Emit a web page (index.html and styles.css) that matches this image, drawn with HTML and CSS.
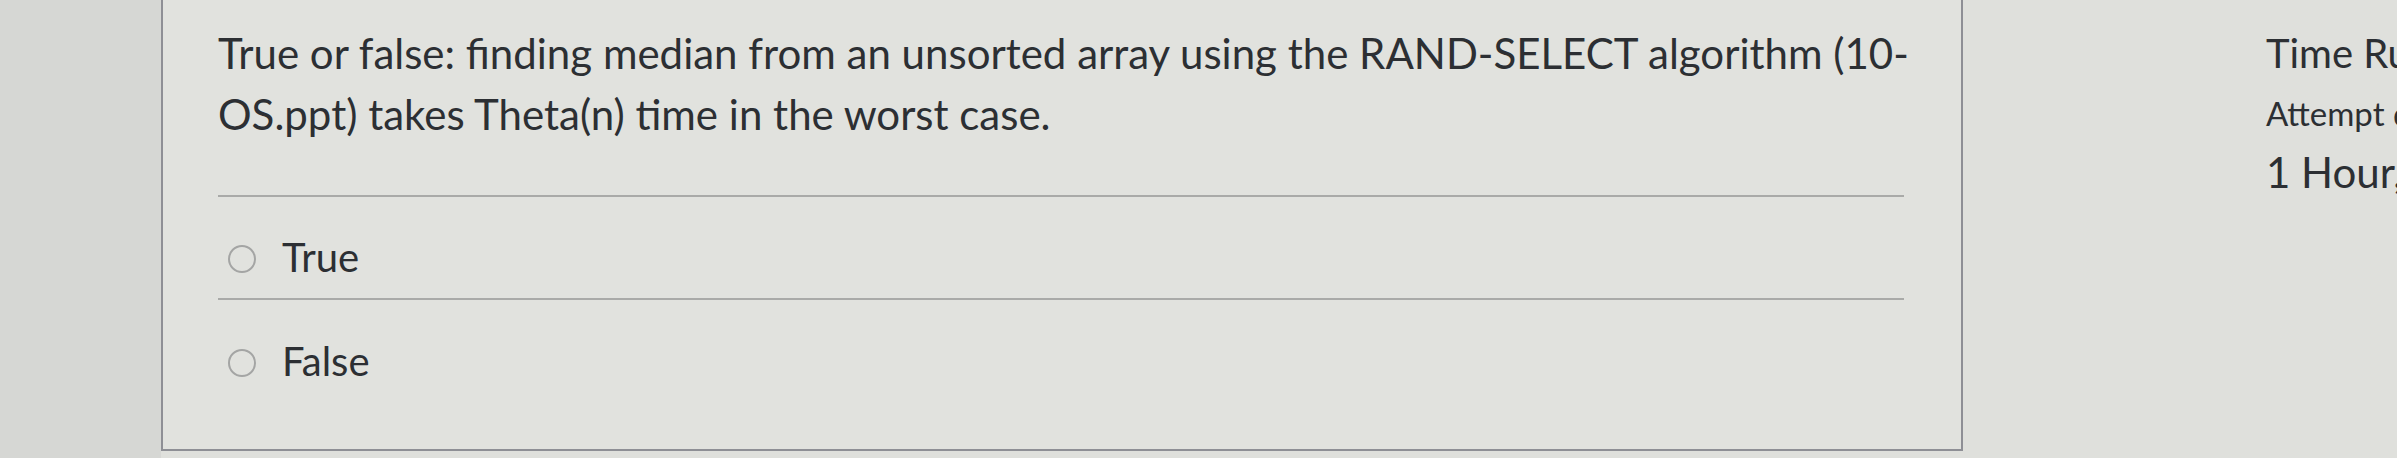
FILE: index.html
```html
<!DOCTYPE html>
<html>
<head>
<meta charset="utf-8">
<link rel="stylesheet" href="styles.css">
</head>
<body>
<div class="page">
  <div class="gutter"></div>
  <div class="question">
    <div class="qtext">True or false: finding median from an unsorted array using the RAND-SELECT algorithm (10-<br>OS.ppt) takes Theta(n) time in the worst case.</div>
    <div class="answers">
      <label class="answer"><span class="radio"></span><span class="label">True</span></label>
      <label class="answer"><span class="radio"></span><span class="label">False</span></label>
    </div>
  </div>
  <div class="sidebar">
    <div class="s-title">Time Running:</div>
    <div class="s-small">Attempt due: Today</div>
    <div class="s-time">1 Hour, 59 Minutes</div>
  </div>
</div>
</body>
</html>
```

FILE: styles.css
```css
html, body {
  margin: 0;
  padding: 0;
  width: 2397px;
  height: 458px;
  overflow: hidden;
  background: #dfe0dc;
  font-family: Lato, "Open Sans", sans-serif;
  color: #2c2f33;
}
.page {
  display: flex;
  height: 458px;
  width: 2397px;
  overflow: hidden;
}
.gutter {
  width: 161px;
  flex: none;
  background: #d6d7d4;
}
.question {
  width: 1802px;
  flex: none;
  border-left: 2px solid #8e8f95;
  border-right: 2px solid #8e8f95;
  border-bottom: 2px solid #8e8f95;
  background: #e1e2de;
  padding: 23px 0 0 55px;
  box-sizing: border-box;
  height: 451px;
}
.qtext {
  font-size: 42px;
  line-height: 61px;
  white-space: nowrap;
  padding-bottom: 50px;
  border-bottom: 2px solid #a9aaa8;
  width: 1686px;
}
.answers {
  width: 1686px;
}
.answer {
  display: flex;
  align-items: center;
  height: 103px;
  box-sizing: border-box;
  padding-top: 18px;
  border-bottom: 2px solid #a9aaa8;
  padding-left: 10px;
}
.answer:last-child {
  border-bottom: none;
}
.radio {
  width: 28px;
  height: 28px;
  border: 2px solid #a4a5a4;
  border-radius: 50%;
  box-sizing: border-box;
  margin-right: 26px;
  margin-top: 4px;
}
.label {
  font-size: 40px;
}
.sidebar {
  flex: none;
  padding-left: 303px;
  padding-top: 24px;
  white-space: nowrap;
}
.s-title {
  font-size: 40px;
  line-height: 58px;
}
.s-small {
  font-size: 33px;
  line-height: 58px;
  margin-top: 2px;
}
.s-time {
  font-size: 42px;
  line-height: 60px;
}
```
